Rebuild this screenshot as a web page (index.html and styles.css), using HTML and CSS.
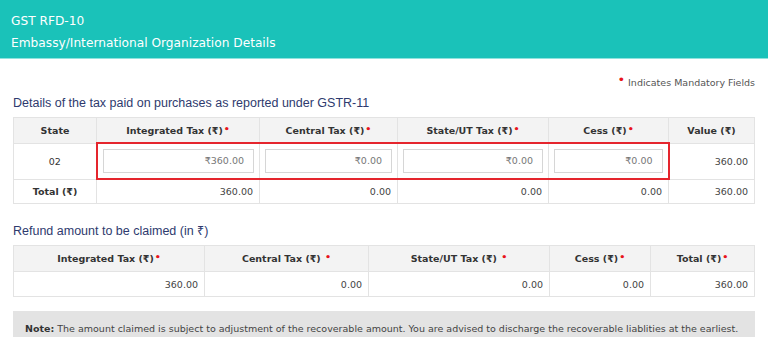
FILE: index.html
```html
<!DOCTYPE html>
<html>
<head>
<meta charset="utf-8">
<link rel="stylesheet" href="styles.css">
</head>
<body>
<div class="header">
  <div class="h-title">GST RFD-10</div>
  <div class="h-sub">Embassy/International Organization Details</div>
</div>
<div class="content">
  <div class="mandatory"><span class="dot">•</span> Indicates Mandatory Fields</div>
  <div class="sec-title sec1">Details of the tax paid on purchases as reported under GSTR-11</div>
  <table class="grid t1">
    <colgroup>
      <col class="c-state"><col class="c-igst"><col class="c-cgst"><col class="c-sgst"><col class="c-cess"><col>
    </colgroup>
    <thead>
      <tr>
        <th>State</th>
        <th>Integrated Tax (₹)<span class="req">•</span></th>
        <th>Central Tax (₹)<span class="req">•</span></th>
        <th>State/UT Tax (₹)<span class="req">•</span></th>
        <th>Cess (₹)<span class="req">•</span></th>
        <th>Value (₹)</th>
      </tr>
    </thead>
    <tbody>
      <tr class="input-row">
        <td class="center">02</td>
        <td class="hl hl-first"><div class="input">₹360.00</div></td>
        <td class="hl"><div class="input">₹0.00</div></td>
        <td class="hl"><div class="input">₹0.00</div></td>
        <td class="hl hl-last"><div class="input">₹0.00</div></td>
        <td class="num">360.00</td>
      </tr>
      <tr class="total-row">
        <td class="center bold">Total (₹)</td>
        <td class="num">360.00</td>
        <td class="num">0.00</td>
        <td class="num">0.00</td>
        <td class="num">0.00</td>
        <td class="num">360.00</td>
      </tr>
    </tbody>
  </table>
  <div class="sec-title sec2">Refund amount to be claimed (in ₹)</div>
  <table class="grid t2">
    <colgroup>
      <col class="d1"><col class="d2"><col class="d3"><col class="d4"><col>
    </colgroup>
    <thead>
      <tr>
        <th>Integrated Tax (₹)<span class="req">•</span></th>
        <th>Central Tax (₹) <span class="req">•</span></th>
        <th>State/UT Tax (₹) <span class="req">•</span></th>
        <th>Cess (₹)<span class="req">•</span></th>
        <th>Total (₹)<span class="req">•</span></th>
      </tr>
    </thead>
    <tbody>
      <tr class="row2">
        <td class="num">360.00</td>
        <td class="num">0.00</td>
        <td class="num">0.00</td>
        <td class="num">0.00</td>
        <td class="num">360.00</td>
      </tr>
    </tbody>
  </table>
  <div class="note"><b>Note:</b> The amount claimed is subject to adjustment of the recoverable amount. You are advised to discharge the recoverable liablities at the earliest.</div>
</div>
</body>
</html>
```

FILE: styles.css
```css
html, body {
  margin: 0;
  padding: 0;
  background: #fff;
  overflow: hidden;
}
body {
  font-family: "DejaVu Sans", Verdana, sans-serif;
  color: #333;
  width: 768px;
  height: 337px;
}
.header {
  background: #1ac2b9;
  height: 58px;
  border-bottom: 1px solid #8fe3de;
  padding: 0 11px;
  color: #fff;
  box-sizing: content-box;
}
.h-title {
  font-size: 12.2px;
  padding-top: 13px;
  line-height: 16px;
}
.h-sub {
  font-size: 12.2px;
  line-height: 16px;
  margin-top: 6px;
}
.content {
  padding: 0 13px;
}
.mandatory {
  text-align: right;
  font-size: 9.5px;
  color: #555;
  margin-top: 17px;
  line-height: 14px;
  height: 14px;
}
.dot {
  color: #e8141b;
  font-size: 13px;
  line-height: 0;
  vertical-align: 2px;
}
.sec-title {
  font-family: "Liberation Sans", Arial, sans-serif;
  font-size: 12.5px;
  color: #2e3a6e;
  line-height: 16px;
  height: 16px;
}
.sec1 {
  margin-top: 5px;
}
.sec2 {
  margin-top: 19px;
}
.grid {
  width: 742px;
  border-collapse: collapse;
  table-layout: fixed;
  margin-top: 6px;
  font-size: 9.5px;
}
.grid th, .grid td {
  border: 1px solid #e3e3e3;
  padding: 0 6px;
}
.grid th {
  background: #f3f3f3;
  font-weight: bold;
  color: #333;
  height: 24px;
  text-align: center;
}
.t2 th { height: 25px; }
.req {
  color: #e8141b;
  margin-left: 1px;
  vertical-align: 2px;
  line-height: 0;
}
.c-state { width: 83px; }
.c-igst { width: 163px; }
.c-cgst { width: 138px; }
.c-sgst { width: 151px; }
.c-cess { width: 120px; }
.input-row td {
  height: 34px;
}
.total-row td {
  height: 23px;
}
.center { text-align: center; }
.bold { font-weight: bold; }
.num { text-align: right; color: #444; }
.grid .hl {
  border-top: 2px solid #e5252d;
  border-bottom: 2px solid #e5252d;
  padding: 0 5px;
}
.grid .hl-first { border-left: 2px solid #e5252d; }
.grid .hl-last { border-right: 2px solid #e5252d; }
.input {
  border: 1px solid #d6d6d6;
  height: 22px;
  line-height: 22px;
  text-align: right;
  padding: 0 9px;
  color: #777;
  font-size: 9.5px;
}
.d1 { width: 191px; }
.d2 { width: 164px; }
.d3 { width: 181px; }
.d4 { width: 101px; }
.row2 td { height: 24px; }
.note {
  margin-top: 14px;
  background: #e3e3e3;
  font-size: 9.5px;
  color: #444;
  padding: 11px 12px;
  line-height: 14px;
  white-space: nowrap;
}
.note b { color: #333; }
```
